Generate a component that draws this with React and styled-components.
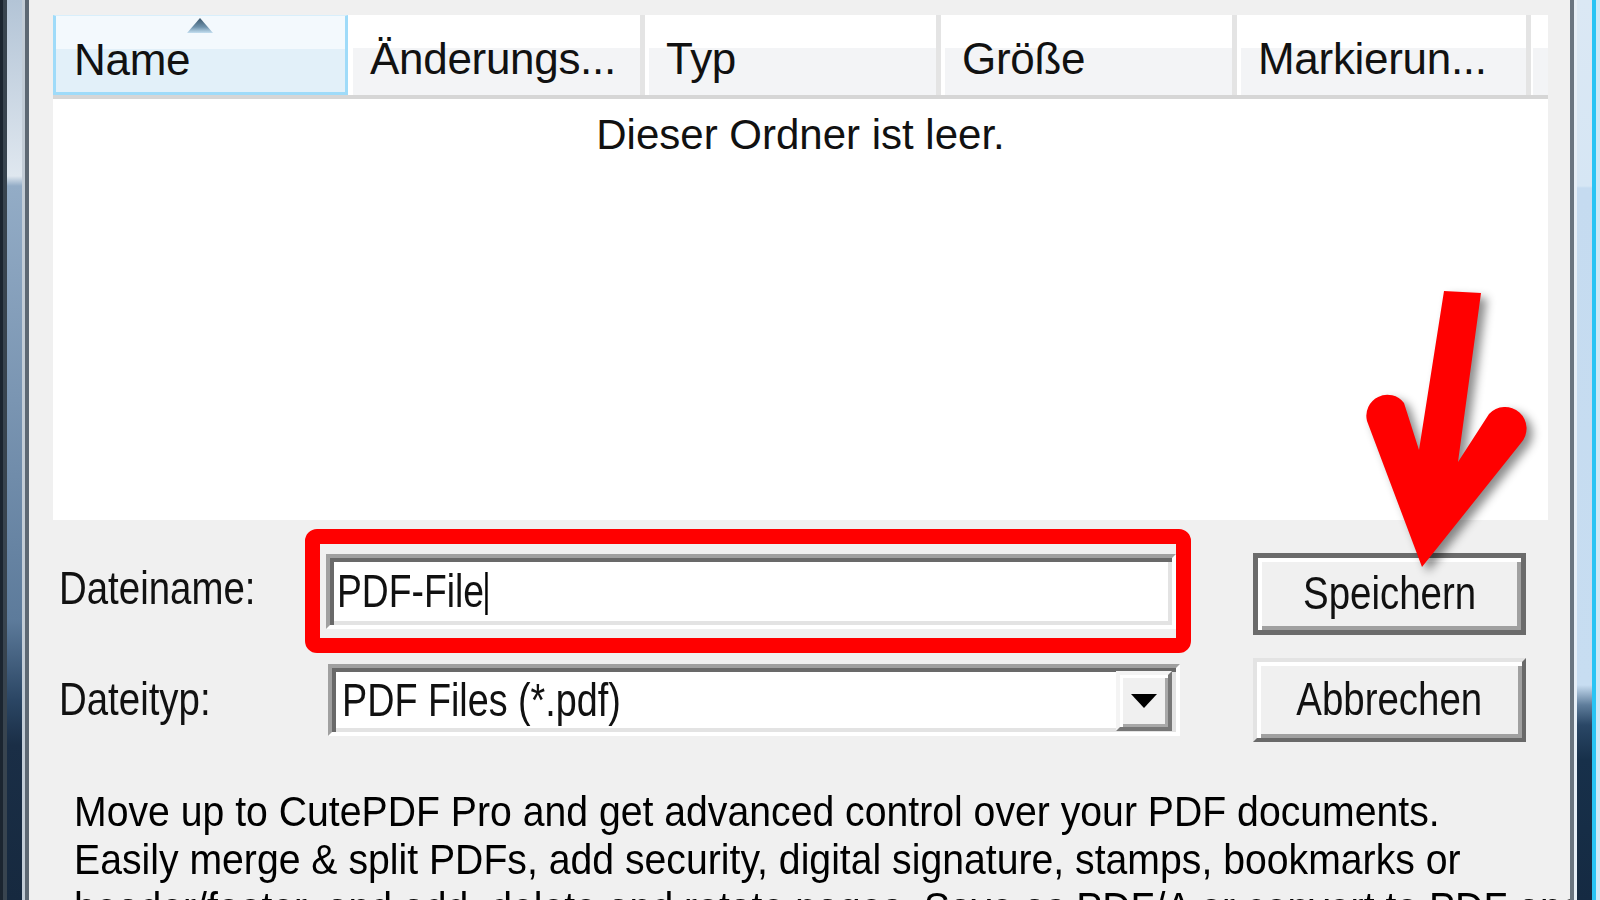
import React from "react"
import styled, { createGlobalStyle } from "styled-components"

const GlobalStyle = createGlobalStyle`
  html, body {
    margin: 0;
    padding: 0;
  }
  body {
    width: 1600px;
    height: 900px;
    overflow: hidden;
    background: #f0f0f0;
    color: #000;
    font-family: "Liberation Sans", Arial, sans-serif;
  }
  * {
    box-sizing: border-box;
  }
`

const columns = [
  { label: "Name", width: 295, selected: true },
  { label: "Änderungs...", width: 294 },
  { label: "Typ", width: 294 },
  { label: "Größe", width: 294 },
  { label: "Markierun...", width: 292 },
]

export default function App() {
  return (
    <>
      <GlobalStyle />
      <Screen>
        <LeftFrame />
        <Dialog>
          <ListView>
            <HeaderRow>
              {columns.map((col) => (
                <HeaderCell key={col.label} $width={col.width} $selected={col.selected}>
                  {col.selected && <SortArrow />}
                  {col.label}
                </HeaderCell>
              ))}
              <HeaderFiller />
            </HeaderRow>
            <ListBody>Dieser Ordner ist leer.</ListBody>
          </ListView>

          <FormGrid>
            <Label>
              <Squeeze $x={0.835}>Dateiname:</Squeeze>
            </Label>
            <Highlight>
              <TextField>
                <Squeeze $x={0.81}>
                  PDF-File<Caret />
                </Squeeze>
              </TextField>
            </Highlight>
            <Button $default $top={24} $height={82}>
              <Squeeze $x={0.835} $origin="center">Speichern</Squeeze>
            </Button>

            <Label $lift={-4}>
              <Squeeze $x={0.835}>Dateityp:</Squeeze>
            </Label>
            <Combo>
              <ComboText>
                <Squeeze $x={0.82}>PDF Files (*.pdf)</Squeeze>
              </ComboText>
              <DropButton>
                <svg width="26" height="14" viewBox="0 0 26 14">
                  <polygon points="0,0 26,0 13,14" fill="#000" />
                </svg>
              </DropButton>
            </Combo>
            <Button $height={84}>
              <Squeeze $x={0.835} $origin="center">Abbrechen</Squeeze>
            </Button>
          </FormGrid>

          <Promo>
            <Squeeze $x={0.933}>
              Move up to CutePDF Pro and get advanced control over your PDF documents.
              <br />
              Easily merge &amp; split PDFs, add security, digital signature, stamps, bookmarks or
              <br />
              header/footer, and add, delete and rotate pages. Save as PDF/A or convert to PDF and more.
            </Squeeze>
          </Promo>

          <RedArrow viewBox="1340 270 220 320" width="220" height="320">
            <path
              d="M1444 291 L1481 293 L1458 462 L1489 414 A21 21 0 0 1 1521 443 L1422 567 L1367 421 A21 21 0 0 1 1404 403 L1419 450 Z"
              fill="#ff0000"
            />
          </RedArrow>
        </Dialog>
        <RightFrame />
      </Screen>
    </>
  )
}

function SortArrow() {
  return (
    <SortIcon width="26" height="15" viewBox="0 0 26 15">
      <defs>
        <linearGradient id="sortGrad" x1="0" y1="0" x2="0" y2="1">
          <stop offset="0" stopColor="#3a566b" />
          <stop offset="0.6" stopColor="#6f93ad" />
          <stop offset="1" stopColor="#c4dff0" />
        </linearGradient>
      </defs>
      <polygon points="13,0 26,15 0,15" fill="url(#sortGrad)" />
    </SortIcon>
  )
}

const Screen = styled.div`
  display: flex;
  width: 1600px;
  height: 900px;
  overflow: hidden;
`

const LeftFrame = styled.div`
  flex: 0 0 29px;
  background:
    linear-gradient(to right, #1b2530 0 3px, #38444f 3px 7px, transparent 7px 22px, #c2ccd6 22px 25px, #5d6873 25px 29px),
    linear-gradient(to bottom, #b3c4d6 0, #dfe7ef 176px, #93acc6 186px, #7a95b2 400px, #5d7b9b 620px, #2b4664 700px, #1a2e46 745px, #16293f 900px);
`

const RightFrame = styled.div`
  flex: 0 0 30px;
  background:
    linear-gradient(to right, #6a7580 0 4px, #e6eef6 4px 7px, transparent 7px 22px, #29c4f4 22px 26px, #cde9f6 26px 30px),
    linear-gradient(to bottom, #dbe8f4 0, #d6e6f4 186px, #c5dbf0 188px, #c7ddf1 685px, #5f7d9b 705px, #2a4766 725px, #17304a 760px, #152a42 900px);
`

const Dialog = styled.div`
  position: relative;
  flex: 1;
  min-width: 0;
  overflow: hidden;
  display: flex;
  flex-direction: column;
  padding: 15px 22px 0 24px;
  background: #f0f0f0;
`

const Squeeze = styled.span`
  display: inline-block;
  white-space: nowrap;
  transform: scaleX(${(p) => p.$x});
  transform-origin: ${(p) => p.$origin || "left"} center;
`

const ListView = styled.div`
  flex: 0 0 505px;
  display: flex;
  flex-direction: column;
  background: #fff;
`

const HeaderRow = styled.div`
  display: flex;
  height: 84px;
  border-bottom: 4px solid #d6d6d6;
`

const HeaderCell = styled.div`
  position: relative;
  flex: 0 0 ${(p) => p.$width}px;
  padding: 22px 0 0 ${(p) => (p.$selected ? 18 : 19)}px;
  font-size: 44px;
  line-height: 44px;
  letter-spacing: -0.3px;
  color: #111;
  white-space: nowrap;
  background: ${(p) =>
    p.$selected
      ? "linear-gradient(to bottom, #f3f9fd 0 33px, #e2f0f9 33px 100%)"
      : "linear-gradient(to bottom, #ffffff 0 33px, #f3f4f6 33px 100%)"};
  border: ${(p) => (p.$selected ? "3px solid #9fdbf9" : "none")};
  border-top: ${(p) => (p.$selected ? "1px solid #d9effb" : "none")};
  border-right: ${(p) => (p.$selected ? "3px solid #9fdbf9" : "5px solid #e4e4e4")};
  margin-right: ${(p) => (p.$selected ? 3 : 2)}px;
  box-shadow: ${(p) => (p.$selected ? "none" : "inset 2px 0 0 #ffffff")};
`

const HeaderFiller = styled.div`
  flex: 1;
  background: linear-gradient(to bottom, #ffffff 0 33px, #f3f4f6 33px 100%);
`

const SortIcon = styled.svg`
  position: absolute;
  top: 2px;
  left: 131px;
`

const ListBody = styled.div`
  flex: 1;
  padding-top: 15px;
  text-align: center;
  font-size: 42px;
  line-height: 42px;
  color: #111;
`

const FormGrid = styled.div`
  display: grid;
  width: 1467px;
  grid-template-columns: 246px 886px 1fr;
  grid-template-rows: 124px 84px;
  row-gap: 5px;
  margin-top: 9px;
  margin-left: 6px;
`

const Label = styled.div`
  align-self: center;
  margin-top: ${(p) => -6 - (p.$lift || 0)}px;
  font-size: 46px;
  line-height: 46px;
  color: #111;
`

const Highlight = styled.div`
  display: flex;
  height: 124px;
  padding: 10px 0 9px 6px;
  border: 15px solid #ff0000;
  border-radius: 12px;
`

const sunken = `
  border: 4px solid;
  border-color: #a0a0a0 #ffffff #ffffff #a0a0a0;
  box-shadow: inset 4px 4px 0 #696969, inset -4px -4px 0 #e3e3e3;
  background: #fff;
`

const TextField = styled.div`
  ${sunken}
  flex: 1;
  display: flex;
  align-items: center;
  padding: 0 0 0 7px;
  font-size: 46px;
  line-height: 46px;
  color: #111;
`

const Caret = styled.span`
  display: inline-block;
  width: 3px;
  height: 43px;
  margin-left: 2px;
  vertical-align: -8px;
  background: #000;
`

const Combo = styled.div`
  ${sunken}
  display: flex;
  align-self: center;
  height: 72px;
  margin-left: 23px;
  margin-right: 11px;
`

const ComboText = styled.div`
  flex: 1;
  padding: 9px 0 0 10px;
  font-size: 46px;
  line-height: 46px;
  color: #111;
`

const DropButton = styled.div`
  display: flex;
  align-items: center;
  justify-content: center;
  width: 56px;
  margin: 3px 4px 1px 0;
  background: #f0f0f0;
  border: 4px solid;
  border-color: #f4f4f4 #777777 #777777 #f4f4f4;
  box-shadow: inset 3px 3px 0 #ffffff, inset -3px -3px 0 #a8a8a8;
`

const Button = styled.div`
  display: flex;
  align-items: center;
  justify-content: center;
  align-self: start;
  justify-self: end;
  width: 273px;
  height: ${(p) => p.$height}px;
  margin-top: ${(p) => p.$top || 0}px;
  background: #f0f0f0;
  border: ${(p) => (p.$default ? "5px solid #6b6b6b" : "4px solid")};
  border-color: ${(p) => (p.$default ? "#6b6b6b" : "#e3e3e3 #696969 #696969 #e3e3e3")};
  box-shadow: inset 4px 4px 0 #ffffff, inset -4px -4px 0 #a0a0a0;
  padding-bottom: 2px;
  font-size: 46px;
  line-height: 46px;
  color: #111;
`

const Promo = styled.div`
  margin-top: 46px;
  padding-left: 21px;
  font-size: 42px;
  line-height: 48px;
  color: #000;
  white-space: nowrap;
`

const RedArrow = styled.svg`
  position: absolute;
  left: 1311px;
  top: 270px;
  overflow: visible;
  filter: drop-shadow(6px 5px 5px rgba(0, 0, 0, 0.45));
`
